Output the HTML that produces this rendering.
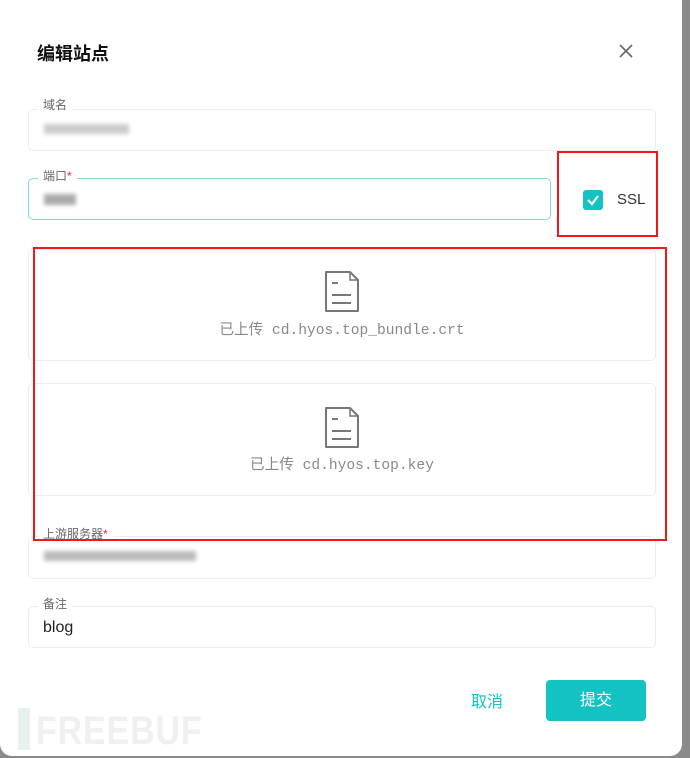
<!DOCTYPE html>
<html><head><meta charset="utf-8"><style>
body{margin:0;width:690px;height:758px;background:#8a8a8a;position:relative;overflow:hidden;font-family:"Liberation Sans","Noto Sans CJK SC",sans-serif;}
.dlg{position:absolute;left:0;top:-10px;width:682px;height:766px;background:#fff;border-radius:12px;}
.a{position:absolute;}
.box{position:absolute;left:28px;width:626px;border:1px solid #ebedf2;border-radius:5px;}
.lbl{position:absolute;left:38px;background:#fff;padding:0 5px;font-size:12px;color:#666;line-height:14px;}
.star{color:#f5222d;}
.blur{position:absolute;background:#ddd;filter:blur(2px);}
.txt{position:absolute;width:100%;text-align:center;font-family:"Liberation Mono","Noto Sans CJK SC",monospace;font-size:14.6px;color:#888;}
.red{position:absolute;border:2px solid #f01818;}
</style></head><body>
<div class="dlg"></div>
<div class="a" style="left:37px;top:40px;font-size:18px;font-weight:bold;color:#111;">编辑站点</div>
<svg class="a" style="left:618px;top:43px" width="16" height="16"><path d="M2 2L14 14M14 2L2 14" stroke="#666" stroke-width="1.6"/></svg>

<div class="box" style="top:109px;height:40px;"></div>
<div class="lbl" style="top:98px;">域名</div>
<div class="blur" style="left:44px;top:124px;width:85px;height:10px;background:#ccc;"></div>

<div class="box" style="top:178px;height:40px;width:521px;border-color:#7fdcd8;"></div>
<div class="lbl" style="top:169px;">端口<span class="star">*</span></div>
<div class="blur" style="left:44px;top:194px;width:32px;height:11px;background:#aaa;"></div>

<div class="a" style="left:583px;top:190px;width:20px;height:20px;background:#13c2c2;border-radius:3px;"></div>
<svg class="a" style="left:583px;top:190px" width="20" height="20"><path d="M5 10L9 14L15 6" stroke="#fff" stroke-width="2.2" fill="none"/></svg>
<div class="a" style="left:617px;top:191px;font-size:15px;color:#333;">SSL</div>
<div class="red" style="left:557px;top:151px;width:97px;height:82px;"></div>

<div class="box" style="top:249px;height:110px;">
<svg class="a" style="left:295px;top:20px" width="36" height="44"><path d="M2 2H26L34 10V41H2Z" stroke="#777" stroke-width="2" fill="none" stroke-linejoin="round"/><path d="M26 2V10H34" stroke="#777" stroke-width="1.5" fill="none"/><path d="M8 13H14M8 25H27M8 33H27" stroke="#777" stroke-width="2"/></svg>
<div class="txt" style="top:68px;">已上传 cd.hyos.top_bundle.crt</div></div>

<div class="box" style="top:383px;height:111px;">
<svg class="a" style="left:295px;top:22px" width="36" height="44"><path d="M2 2H26L34 10V41H2Z" stroke="#777" stroke-width="2" fill="none" stroke-linejoin="round"/><path d="M26 2V10H34" stroke="#777" stroke-width="1.5" fill="none"/><path d="M8 13H14M8 25H27M8 33H27" stroke="#777" stroke-width="2"/></svg>
<div class="txt" style="top:69px;">已上传 cd.hyos.top.key</div></div>

<div class="box" style="top:536px;height:41px;"></div>
<div class="lbl" style="top:527px;">上游服务器<span class="star">*</span></div>
<div class="blur" style="left:44px;top:551px;width:152px;height:10px;background:#bbb;"></div>
<div class="red" style="left:33px;top:247px;width:630px;height:290px;"></div>

<div class="box" style="top:606px;height:40px;"></div>
<div class="lbl" style="top:597px;">备注</div>
<div class="a" style="left:43px;top:619px;font-size:16px;color:#222;">blog</div>

<div class="a" style="left:471px;top:688px;font-size:16px;color:#13c2c2;">取消</div>
<div class="a" style="left:546px;top:680px;width:100px;height:41px;background:#13c2c2;border-radius:4px;color:#fff;font-size:16px;text-align:center;line-height:41px;">提交</div>

<div class="a" style="left:18px;top:708px;width:12px;height:42px;background:#e6f0ec;"></div>
<div class="a" style="left:36px;top:711px;font-size:40px;font-weight:bold;color:#f0f0f0;letter-spacing:1px;line-height:40px;transform:scaleX(0.85);transform-origin:left;">FREEBUF</div>
</body></html>
